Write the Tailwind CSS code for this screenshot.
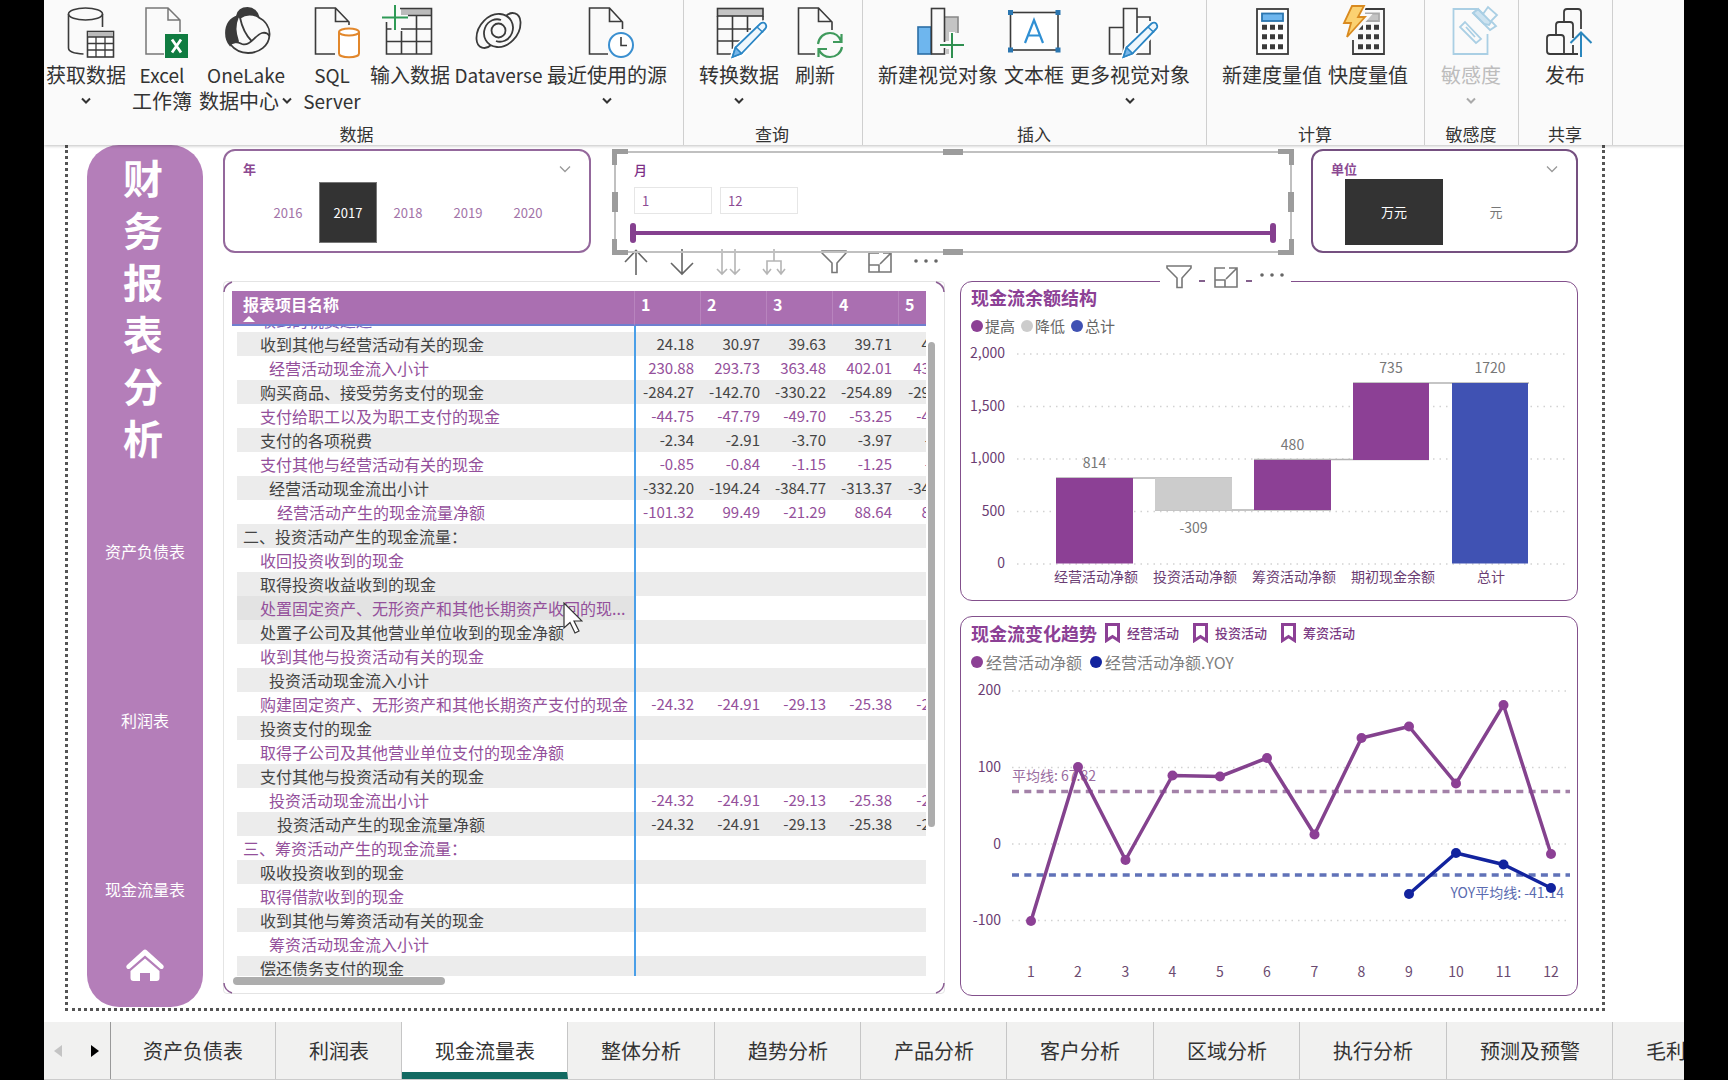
<!DOCTYPE html>
<html lang="zh-CN">
<head>
<meta charset="utf-8">
<title>财务报表分析</title>
<script src="https://cdn.jsdelivr.net/npm/@tailwindcss/browser@4"></script>
</head>
<body class="bg-black min-h-screen flex flex-col font-['Noto_Sans_CJK_SC',sans-serif] text-[#333]">
<div class="mx-11 bg-white flex-1 flex flex-col overflow-hidden">

<!-- Ribbon -->
<header class="relative z-10 bg-[#fafafa] h-[145px] flex shrink-0 shadow-[0_1px_3px_rgba(0,0,0,0.25)] text-[20px] leading-[26px] whitespace-nowrap">
  <section class="pl-0.5 pr-4 pt-[5px] border-r border-[#cfcfcf] flex flex-col justify-between">
    <div class="flex gap-1.5">
      <button class="w-20 flex flex-col items-center">
        <svg class="w-[60px] h-[54px] mb-[3px]" viewBox="0 0 60 54" fill="none" stroke="#3b3b3b" stroke-width="1.6"><ellipse cx="29.5" cy="9" rx="17" ry="6"/><path d="M12.5 9v34c0 3 5 5.500 15 6M46.500 9v13"/><rect x="31.500" y="26.500" width="26" height="25.500" fill="#fff"/><rect x="32" y="27" width="25" height="5" fill="#bbb" stroke="none"/><path d="M31.500 32h26M31.500 38.500h26M31.500 45h26M40 32v20M49 32v20" stroke-width="1.300"/></svg>
        <span>获取数据</span>
        <span class="h-[26px] flex items-center"><svg class="w-3 h-2" viewBox="0 0 12 8" fill="none" stroke="#333" stroke-width="2"><path d="M2 1.500l4 4 4-4"/></svg></span>
      </button>
      <button class="w-[60px] flex flex-col items-center">
        <svg class="w-[60px] h-[54px] mb-[3px]" viewBox="0 0 60 54" fill="none" stroke="#777" stroke-width="1.500"><path d="M32 49H14V3h22l12 12v12M36 3v12h12"/><rect x="33" y="29" width="23" height="24" fill="#107c41" stroke="none"/><path d="M40 34.500l9 13M49 34.500l-9 13" stroke="#fff" stroke-width="2.800"/></svg>
        <span class="text-[19px]">Excel</span><span>工作簿</span>
      </button>
      <button class="w-24 flex flex-col items-center">
        <svg class="w-[60px] h-[54px] mb-[3px]" viewBox="0 0 60 54" fill="none" stroke="#3b3b3b" stroke-width="1.800"><path d="M22 11C14 13 10 20 10 28c0 6 1.500 9 4 12 1-2 4-3 7-3l1-1c-3-8-3-17 0-24z" fill="#3b3b3b"/><path d="M21 11c1-5 5-8 10.500-8 6 0 10 4 11 9-5-3-13-3.500-18 .500z" fill="#3b3b3b"/><path d="M24 12.500c2 10 6 18 12 24M42 12c8 4 12 11 11.500 18C53 41 43 48 32 48c-8 0-14-4-18-9 4-3 8-2 12 0 8 3 13-9 20-11 4-1 7 1 7.500 4"/></svg>
        <span class="text-[19px]">OneLake</span><span class="flex items-center gap-0.5">数据中心<svg class="w-3 h-2" viewBox="0 0 12 8" fill="none" stroke="#333" stroke-width="2"><path d="M2 1.500l4 4 4-4"/></svg></span>
      </button>
      <button class="w-16 flex flex-col items-center">
        <svg class="w-[60px] h-[54px] mb-[3px]" viewBox="0 0 60 54" fill="none" stroke="#3b3b3b" stroke-width="1.600"><path d="M33 49H13.500V3h20L47 17v3M33.500 3v13.500H46"/><g stroke="#e2872b" stroke-width="2" fill="#fff"><path d="M37 27v21.500c0 5 20 5 20 0V27"/><ellipse cx="47" cy="27" rx="10" ry="3.500"/></g></svg>
        <span class="text-[19px]">SQL</span><span class="text-[19px]">Server</span>
      </button>
      <button class="w-20 flex flex-col items-center">
        <svg class="w-[60px] h-[54px] mb-[3px]" viewBox="0 0 60 54" fill="none" stroke="#3b3b3b" stroke-width="1.600"><rect x="21" y="4" width="30" height="6" fill="#bbb" stroke="none"/><path d="M20 3.500h31.500V49H6.500V17M28 10.500h23.500M21 24h30M6.500 36.500h45M36.500 11v38M21.500 26v23M6.500 24h5"/><path d="M15 0v25M2 12.500h26" stroke="#2f9a56" stroke-width="2"/></svg>
        <span>输入数据</span>
      </button>
      <button class="w-[85px] flex flex-col items-center">
        <svg class="w-[60px] h-[54px] mb-[3px]" viewBox="0 0 60 54" fill="none" stroke="#3b3b3b" stroke-width="1.800"><path d="M22 40c-5 5-14 4-14.500-6C7 20 20 8 31 9c11 1 15 11 12 19-3 8-11 10-16 8"/><path d="M37 11c5-5 14-4 14.500 6C52 31 39 43 28 42c-11-1-15-11-12-19 3-8 11-10 16-8"/><circle cx="29.500" cy="25.500" r="7"/></svg>
        <span class="text-[19px]">Dataverse</span>
      </button>
      <button class="w-[120px] flex flex-col items-center">
        <svg class="w-[60px] h-[54px] mb-[3px]" viewBox="0 0 60 54" fill="none" stroke="#3b3b3b" stroke-width="1.600"><path d="M31 49H12.500V3h20L45.500 17v7M32.500 3v13.500h13"/><circle cx="44" cy="40" r="12" stroke="#3a8fd0" stroke-width="2" fill="#fff"/><path d="M44 32v8.500h6"/></svg>
        <span>最近使用的源</span>
        <span class="h-[26px] flex items-center"><svg class="w-3 h-2" viewBox="0 0 12 8" fill="none" stroke="#333" stroke-width="2"><path d="M2 1.500l4 4 4-4"/></svg></span>
      </button>
    </div>
    <h2 class="text-[17px] leading-5 pb-px text-center">数据</h2>
  </section>
  <section class="pl-[15px] pr-[17px] pt-[5px] border-r border-[#cfcfcf] flex flex-col justify-between">
    <div class="flex gap-1.5">
      <button class="w-20 flex flex-col items-center">
        <svg class="w-[60px] h-[54px] mb-[3px]" viewBox="0 0 60 54" fill="none" stroke="#3b3b3b" stroke-width="1.600"><rect x="8.500" y="3.500" width="45.500" height="7.500" fill="#c4c4c4"/><path d="M8.500 11v38H24M54 11v7M23.500 11v33M38.500 11v16M8.500 24H42M8.500 36H31"/><path d="M23 53l3.500-10 25-24c2-2 5-1.500 6 0 1.500 2 1 4-.5 5.500L33 49z" fill="#fff" stroke="#fff" stroke-width="5"/><path d="M23.500 52l3-9.500 25-24c2-1.500 4-1 5 .500s1 3.500-.5 5L32.500 48.500z" fill="#eef7fd" stroke="#2b86c5" stroke-width="1.800"/><path d="M23.500 52l3-9.500 6 6z" fill="#7ab8ea" stroke="#2b86c5"/><path d="M48 22l6 5.500" stroke="#2b86c5"/></svg>
        <span>转换数据</span>
        <span class="h-[26px] flex items-center"><svg class="w-3 h-2" viewBox="0 0 12 8" fill="none" stroke="#333" stroke-width="2"><path d="M2 1.500l4 4 4-4"/></svg></span>
      </button>
      <button class="w-[60px] flex flex-col items-center">
        <svg class="w-[60px] h-[54px] mb-[3px]" viewBox="0 0 60 54" fill="none" stroke="#3b3b3b" stroke-width="1.600"><path d="M30 49H13.500V3h20L47 17v8M33.500 3v13.500H47"/><g stroke="#3f9a5c" stroke-width="2.200"><path d="M33 39c1-7 6-11 12-11 5 0 9 3 11 8M56.500 29v8H48M57 42c-1 6-6 10-12 10-5 0-9-3-11-7M33.500 52v-8H42"/></g></svg>
        <span>刷新</span>
      </button>
    </div>
    <h2 class="text-[17px] leading-5 pb-px text-center">查询</h2>
  </section>
  <section class="pl-[15px] pr-4 pt-[5px] border-r border-[#cfcfcf] flex flex-col justify-between">
    <div class="flex gap-1.5">
      <button class="w-[120px] flex flex-col items-center">
        <svg class="w-[60px] h-[54px] mb-[3px]" viewBox="0 0 60 54" fill="none" stroke="#3b3b3b" stroke-width="1.600"><rect x="10" y="22" width="13" height="27" fill="#6eb6ee" stroke="#2b6ea5"/><path d="M37 12h13v16h-8v8h-5z" fill="#c4c4c4" stroke="none"/><path d="M37 12h13v16" stroke="#888"/><rect x="23.500" y="3.500" width="13" height="45.500" fill="#fafafa"/><path d="M37 44h4v5h-4z" fill="#c4c4c4" stroke="none"/><path d="M44 27v26M31 40h26" stroke="#fafafa" stroke-width="6"/><path d="M44 28v25M32 40h24" stroke="#2f8f50" stroke-width="2"/></svg>
        <span>新建视觉对象</span>
      </button>
      <button class="w-[60px] flex flex-col items-center">
        <svg class="w-[60px] h-[54px] mb-[3px]" viewBox="0 0 60 54" fill="none" stroke="#3b3b3b" stroke-width="1.600"><rect x="6.500" y="7.500" width="47.500" height="37.500" fill="#fff"/><path d="M21 38l9-23 9 23M24 30.500h12" stroke="#2f8fd3" stroke-width="2.200"/><path d="M4 5h5v5H4zM51.500 5h5v5h-5zM4 42.500h5v5H4zM51.500 42.500h5v5h-5z" fill="#2b76b0" stroke="none"/></svg>
        <span>文本框</span>
      </button>
      <button class="w-[120px] flex flex-col items-center">
        <svg class="w-[60px] h-[54px] mb-[3px]" viewBox="0 0 60 54" fill="none" stroke="#3b3b3b" stroke-width="1.600"><path d="M23 49H9.500V22.500H23M23.500 49V3.500H37V28M37 12h13v4M50 32v17H33M23.500 49H28"/><path d="M23 53l3.500-10 25-24c2-2 5-1.500 6 0 1.500 2 1 4-.5 5.500L33 49z" fill="#fff" stroke="#fff" stroke-width="5"/><path d="M23.500 52l3-9.500 25-24c2-1.500 4-1 5 .500s1 3.500-.5 5L32.500 48.500z" fill="#eef7fd" stroke="#2b86c5" stroke-width="1.800"/><path d="M23.500 52l3-9.500 6 6z" fill="#7ab8ea" stroke="#2b86c5"/><path d="M48 22l6 5.500" stroke="#2b86c5"/></svg>
        <span>更多视觉对象</span>
        <span class="h-[26px] flex items-center"><svg class="w-3 h-2" viewBox="0 0 12 8" fill="none" stroke="#333" stroke-width="2"><path d="M2 1.500l4 4 4-4"/></svg></span>
      </button>
    </div>
    <h2 class="text-[17px] leading-5 pb-px text-center">插入</h2>
  </section>
  <section class="pl-[15px] pr-4 pt-[5px] border-r border-[#cfcfcf] flex flex-col justify-between">
    <div class="flex gap-1.5">
      <button class="w-[100px] flex flex-col items-center">
        <svg class="w-[60px] h-[54px] mb-[3px]" viewBox="0 0 60 54" fill="none" stroke="#3b3b3b" stroke-width="1.800"><rect x="15" y="4" width="31" height="45" fill="#fff"/><rect x="20" y="8.500" width="21" height="7.500" fill="#6eb6ee" stroke="#2b76b0"/><path d="M20 22.300h21M20 31.700h21M20 41.700h21" stroke-width="5" stroke-dasharray="5 3"/></svg>
        <span>新建度量值</span>
      </button>
      <button class="w-20 flex flex-col items-center">
        <svg class="w-[60px] h-[54px] mb-[3px]" viewBox="0 0 60 54" fill="none" stroke="#3b3b3b" stroke-width="1.800"><path d="M27 4h19v45H15V35"/><path d="M27 8.500h14V16H24" fill="#c4c4c4" stroke="#aaa"/><path d="M20 22.300h21M20 31.700h21M20 41.700h21" stroke-width="5" stroke-dasharray="5 3"/><path d="M13 0.500h13l-5 11h8L8 35l4-16H5z" fill="#fad06c" stroke="#fafafa" stroke-width="5"/><path d="M14 1h12l-6 11h7L9 32l4-14H6z" fill="#fbd171" stroke="#d98a1f"/></svg>
        <span>快度量值</span>
      </button>
    </div>
    <h2 class="text-[17px] leading-5 pb-px text-center">计算</h2>
  </section>
  <section class="pl-4 pr-[17px] pt-[5px] border-r border-[#cfcfcf] flex flex-col justify-between">
    <button class="w-[60px] flex flex-col items-center text-[#bdbdbd]" disabled>
      <svg class="w-[60px] h-[54px] mb-[3px]" viewBox="0 0 60 54" fill="none" stroke="#aacfe4" stroke-width="1.800"><path d="M36 4H12.500v45h34V29"/><path d="M24 17l16 17-5 4L19 22z" fill="#fafafa"/><path d="M25 22l9 10"/><path d="M37 4l13 13-2 3-5-1-11-11z" fill="#cde3f0"/><path d="M37 4l5 5 5-7 9 8-6 6 5 5-6 4-17-17z"/></svg>
      <span>敏感度</span>
      <span class="h-[26px] flex items-center"><svg class="w-3 h-2" viewBox="0 0 12 8" fill="none" stroke="#aaa" stroke-width="2"><path d="M2 1.500l4 4 4-4"/></svg></span>
    </button>
    <h2 class="text-[17px] leading-5 pb-px text-center">敏感度</h2>
  </section>
  <section class="pl-4 pr-[17px] pt-[5px] border-r border-[#cfcfcf] flex flex-col justify-between">
    <button class="w-[60px] flex flex-col items-center">
      <svg class="w-[60px] h-[54px] mb-[3px]" viewBox="0 0 60 54" fill="none" stroke="#3b3b3b" stroke-width="1.800"><path d="M29 17V7q0-3 3-3h11q3 0 3 3v17M21 30V20q0-3 3-3h11q3 0 3 3v13M38 40v9"/><path d="M43 49H15q-3 0-3-3V33q0-3 3-3h11q3 0 3 3v16"/><path d="M46 52V28M35.500 38L46 27.500 56.500 38" stroke="#2a86bd" stroke-width="2"/></svg>
      <span>发布</span>
    </button>
    <h2 class="text-[17px] leading-5 pb-px text-center">共享</h2>
  </section>
</header>

<!-- Report canvas -->
<main class="flex-1 flex ml-[21px] mr-[79px] mb-[11px] pl-[19px] pr-6 border-x-[3px] border-b-[3px] border-dotted border-[#555]">
  <nav class="w-[116px] shrink-0 mb-px bg-[#b47eb9] rounded-[32px] text-white flex flex-col items-center pt-1.5">
    <h1 class="w-10 mr-1 text-[40px] leading-[52px] font-bold text-center">财务报表分析</h1>
    <div class="mt-[76px] flex flex-col items-center gap-[145px] text-[16px] leading-6">
      <a href="#">资产负债表</a>
      <a href="#">利润表</a>
      <a href="#">现金流量表</a>
    </div>
    <a href="#" aria-label="首页" class="mt-12">
      <svg class="w-10 h-8" viewBox="0 0 40 32" fill="#fff"><path d="M18 1.500q2-1.800 4 0l16 14.500q1.500 1.800 0 3.500-1.500 1-3 0L20 6.500 5 19.500q-1.500 1-3 0-1.500-1.700 0-3.500z"/><path d="M20 9.500L34.500 22v7q0 3-3 3H25v-8H15v8H8.500q-3 0-3-3v-7z"/></svg>
    </a>
  </nav>

  <div class="flex-1 min-w-0 ml-5 pt-1 pb-3 flex flex-col gap-7">
    <!-- Slicers -->
    <div class="grid grid-cols-[minmax(0,372fr)_minmax(0,682fr)_minmax(0,267fr)] gap-[17px] h-[104px] text-[13px] leading-5 text-[#8c4a93]">
      <section class="mr-1 rounded-xl border-2 border-[#94689c] px-[18px] pt-2">
        <div class="flex items-center justify-between">
          <h2 class="font-bold">年</h2>
          <button aria-label="展开"><svg class="w-3 h-2" viewBox="0 0 12 8" fill="none" stroke="#999" stroke-width="1.300"><path d="M1 1.500l5 5 5-5"/></svg></button>
        </div>
        <div class="flex pl-4 gap-0.5 mt-[3px] text-[#a273a8]">
          <button class="w-[58px] h-[61px]">2016</button>
          <button class="w-[58px] h-[61px] bg-[#333] border border-[#777] text-white">2017</button>
          <button class="w-[58px] h-[61px]">2018</button>
          <button class="w-[58px] h-[61px]">2019</button>
          <button class="w-[58px] h-[61px]">2020</button>
        </div>
      </section>
      <section class="relative z-[5] px-[22px] pt-[11px]">
        <div class="absolute inset-x-0.5 top-0.5 bottom-0 border-2 border-[#c0c0c0] pointer-events-none"></div>
        <div class="absolute left-0 top-0 size-4 border-l-[5px] border-t-[5px] border-[#9c9c9c]"></div>
        <div class="absolute right-0 top-0 size-4 border-r-[5px] border-t-[5px] border-[#9c9c9c]"></div>
        <div class="absolute left-0 -bottom-0.5 size-4 border-l-[5px] border-b-[5px] border-[#9c9c9c]"></div>
        <div class="absolute right-0 -bottom-0.5 size-4 border-r-[5px] border-b-[5px] border-[#9c9c9c]"></div>
        <div class="absolute left-1/2 -ml-2.5 top-0 w-5 h-1.5 bg-[#9c9c9c]"></div>
        <div class="absolute left-1/2 -ml-2.5 -bottom-0.5 w-5 h-1.5 bg-[#9c9c9c]"></div>
        <div class="absolute left-0 top-[43px] w-1.5 h-5 bg-[#9c9c9c]"></div>
        <div class="absolute right-0 top-[43px] w-1.5 h-5 bg-[#9c9c9c]"></div>
        <h2 class="font-medium text-[#7d2f87]">月</h2>
        <div class="flex gap-2 mt-[7px]">
          <input aria-label="起始月" value="1" class="w-[78px] h-[27px] border border-[#e6e6e6] px-[7px]">
          <input aria-label="结束月" value="12" class="w-[78px] h-[27px] border border-[#e6e6e6] px-[7px]">
        </div>
        <div class="relative -mx-1 mt-[9px] h-5 flex items-center justify-between">
          <div class="absolute inset-x-1 top-2 h-1 bg-[#85408f]"></div>
          <div class="relative w-1.5 h-5 rounded-full bg-[#85408f]"></div>
          <div class="relative w-1.5 h-5 rounded-full bg-[#85408f]"></div>
          <input type="range" min="1" max="12" value="1" aria-label="起始月滑块" class="absolute left-0 w-1/2 opacity-0">
          <input type="range" min="1" max="12" value="12" aria-label="结束月滑块" class="absolute right-0 w-1/2 opacity-0">
        </div>
      </section>
      <section class="rounded-xl border-2 border-[#755080] px-[18px] pt-2">
        <div class="flex items-center justify-between">
          <h2 class="font-bold">单位</h2>
          <button aria-label="展开"><svg class="w-3 h-2" viewBox="0 0 12 8" fill="none" stroke="#999" stroke-width="1.300"><path d="M1 1.500l5 5 5-5"/></svg></button>
        </div>
        <div class="flex pl-[14px] gap-1">
          <button class="w-[98px] h-[66px] bg-[#333] text-white">万元</button>
          <button class="w-[98px] h-[66px] text-[#777]">元</button>
        </div>
      </section>
    </div>

    <div class="flex-1 grid grid-cols-[minmax(0,722fr)_minmax(0,618fr)] gap-[15px]">
      <!-- Statement table -->
      <section class="relative mb-0.5 border border-[#e4e4e4] rounded-sm">
        <svg class="absolute -left-px -top-px size-3" viewBox="0 0 12 12" fill="none" stroke="#8c5f94" stroke-width="1.500"><path d="M1 11q0-7 8-10"/></svg>
        <svg class="absolute -right-px -top-px size-3" viewBox="0 0 12 12" fill="none" stroke="#8c5f94" stroke-width="1.500"><path d="M11 11q0-7-8-10"/></svg>
        <svg class="absolute -left-px -bottom-px size-3" viewBox="0 0 12 12" fill="none" stroke="#8c5f94" stroke-width="1.500"><path d="M1 1q0 7 8 10"/></svg>
        <svg class="absolute -right-px -bottom-px size-3" viewBox="0 0 12 12" fill="none" stroke="#8c5f94" stroke-width="1.500"><path d="M11 1q0 7-8 10"/></svg>

        <div class="absolute left-[399px] -top-[33px] flex gap-5">
          <button aria-label="向上钻取" class="w-[26px] h-[27px]"><svg viewBox="0 0 26 27" fill="none" stroke="#666" stroke-width="1.600"><path d="M13 26V2M2 13L13 1.500 24 13"/></svg></button>
          <button aria-label="向下钻取" class="w-[26px] h-[27px]"><svg viewBox="0 0 26 27" fill="none" stroke="#666" stroke-width="1.600"><path d="M13 0v24M2 14l11 11 11-11"/></svg></button>
          <button aria-label="转至下一级别" class="w-[26px] h-[27px]"><svg viewBox="0 0 26 27" fill="none" stroke="#b5b5b5" stroke-width="1.600"><path d="M7 0v25M2 20l5 5 5-5M20 0v25M15 20l5 5 5-5"/></svg></button>
          <button aria-label="展开下一级别" class="w-[26px] h-[27px]"><svg viewBox="0 0 26 27" fill="none" stroke="#b5b5b5" stroke-width="1.600"><path d="M13 0v12M6 25V12h14v13M2 20l4 5 4-5M16 20l4 5 4-5"/></svg></button>
          <button aria-label="筛选器" class="w-[26px] h-[27px] ml-[14px]"><svg viewBox="0 0 26 27" fill="none" stroke="#777" stroke-width="1.600"><path d="M1 2h24v2L16 14v9.500h-5V14L1 4z"/></svg></button>
          <button aria-label="焦点模式" class="w-[26px] h-[27px]"><svg viewBox="0 0 26 27" fill="none" stroke="#777" stroke-width="1.600"><path d="M12 4H2v19h22V12M2 16h10v7M13 15L24 4M16 4h8v8"/></svg></button>
          <button aria-label="更多选项" class="w-[26px] h-[27px]"><svg viewBox="0 0 26 27" fill="#666"><circle cx="3" cy="12" r="1.800"/><circle cx="13" cy="12" r="1.800"/><circle cx="23" cy="12" r="1.800"/></svg></button>
        </div>

        <div class="ml-2 mr-[18px] mt-[9px] h-[685px] overflow-hidden">
          <table class="table-fixed w-[733px] border-separate border-spacing-0 text-[16px] leading-6">
            <colgroup><col class="w-[402px]"><col class="w-[66px]"><col class="w-[66px]"><col class="w-[66px]"><col class="w-[66px]"><col class="w-[67px]"></colgroup>
            <thead>
              <tr class="bg-[#aa6fb1] text-white text-left h-[35px]">
                <th scope="col" class="relative pl-[11px] pb-2 font-bold border-b-2 border-[#6f7fd0]">报表项目名称<svg class="absolute left-[11px] bottom-0.5 w-3 h-1.5" viewBox="0 0 12 6" fill="#fff"><path d="M0 6l6-6 6 6z"/></svg></th>
                <th scope="col" class="pl-1.5 pb-2 border-l border-l-[#b884be] border-b-2 border-b-[#6f7fd0]">1</th>
                <th scope="col" class="pl-1.5 pb-2 border-l border-l-[#b884be] border-b-2 border-b-[#6f7fd0]">2</th>
                <th scope="col" class="pl-1.5 pb-2 border-l border-l-[#b884be] border-b-2 border-b-[#6f7fd0]">3</th>
                <th scope="col" class="pl-1.5 pb-2 border-l border-l-[#b884be] border-b-2 border-b-[#6f7fd0]">4</th>
                <th scope="col" class="pl-1.5 pb-2 border-l border-l-[#b884be] border-b-2 border-b-[#6f7fd0]">5</th>
              </tr>
            </thead>
            <tbody id="rows"></tbody>
          </table>
        </div>
        <div class="absolute right-[9px] top-[60px] w-[7px] h-[485px] rounded-full bg-[#adadad]"></div>
        <div class="absolute left-[9px] bottom-2 w-[212px] h-2 rounded-full bg-[#adadad]"></div>
        <svg class="absolute left-[339px] top-[320px] w-5 h-8" viewBox="0 0 20 32" fill="#fff" stroke="#333" stroke-width="1.200"><path d="M1 1v25l6-5.500 5 10.500 4-2-5-10h8z"/></svg>
      </section>

      <!-- Charts -->
      <div class="flex flex-col gap-[15px]">
        <section class="relative h-80 rounded-xl border border-[#83508c] pt-[3px]">
          <div class="absolute left-[199px] -top-[19px] w-[131px] h-[27px] bg-white flex items-center justify-between px-1.5">
            <button aria-label="筛选器" class="w-[26px] h-[27px]"><svg viewBox="0 0 26 27" fill="none" stroke="#777" stroke-width="1.600"><path d="M1 3h24v2L16 15v9.500h-5V15L1 5z"/></svg></button>
            <span class="w-1.5 h-0.5 mt-[9px] bg-[#83608c]"></span>
            <button aria-label="焦点模式" class="w-[26px] h-[27px]"><svg viewBox="0 0 26 27" fill="none" stroke="#777" stroke-width="1.600"><path d="M12 5H2v19h22V13M2 17h10v7M13 16L24 5M16 5h8v8"/></svg></button>
            <span class="w-1.5 h-0.5 mt-[9px] bg-[#83608c]"></span>
            <button aria-label="更多选项" class="w-[26px] h-[27px]"><svg viewBox="0 0 26 27" fill="#666"><circle cx="3" cy="12" r="1.800"/><circle cx="13" cy="12" r="1.800"/><circle cx="23" cy="12" r="1.800"/></svg></button>
          </div>
          <h2 class="ml-2.5 h-6 leading-6 text-[18px] font-bold text-[#8c4095]">现金流余额结构</h2>
          <ul class="ml-2.5 mt-[5px] h-6 flex items-center gap-1.5 text-[15px] text-[#666]">
            <li class="flex items-center gap-0.5"><i class="size-3 rounded-full bg-[#8c4095]"></i>提高</li>
            <li class="flex items-center gap-0.5"><i class="size-3 rounded-full bg-[#ccc]"></i>降低</li>
            <li class="flex items-center gap-0.5"><i class="size-3 rounded-full bg-[#4052b3]"></i>总计</li>
          </ul>
          <svg class="w-full" viewBox="961 338 616 250" font-size="14">
            <g stroke="#d2d2d2" stroke-width="1.500" stroke-dasharray="1.500 5"><path d="M1017 354h550M1017 406.500h550M1017 459h550M1017 511.500h550M1017 564h550"/></g>
            <g fill="#6b3d73" text-anchor="end"><text x="1005" y="358">2,000</text><text x="1005" y="411">1,500</text><text x="1005" y="463">1,000</text><text x="1005" y="516">500</text><text x="1005" y="568">0</text></g>
            <path d="M1056 478h176M1155 510h176M1254 459.500h175M1353 383h176" stroke="#b3b3b3" stroke-width="1.500"/>
            <g fill="#8c4095"><rect x="1056" y="478" width="77" height="85.500"/><rect x="1254" y="460" width="77" height="50"/><rect x="1353" y="383" width="76" height="77"/></g>
            <rect x="1155" y="478" width="77" height="32" fill="#ccc"/><rect x="1452" y="383" width="76" height="180.500" fill="#4052b3"/>
            <g fill="#777" text-anchor="middle"><text x="1094.500" y="468">814</text><text x="1193.500" y="533">-309</text><text x="1292.500" y="450">480</text><text x="1391" y="373">735</text><text x="1490" y="373">1720</text></g>
            <g fill="#6b3d73" text-anchor="middle"><text x="1096" y="582">经营活动净额</text><text x="1195" y="582">投资活动净额</text><text x="1294" y="582">筹资活动净额</text><text x="1393" y="582">期初现金余额</text><text x="1491" y="582">总计</text></g>
          </svg>
        </section>

        <section class="flex-1 rounded-xl border border-[#83508c] pt-1">
          <div class="ml-2.5 h-6 flex items-center text-[#8c4095]">
            <h2 class="text-[18px] font-bold">现金流变化趋势</h2>
            <div class="ml-2 flex gap-3.5 text-[13px] font-medium text-[#7a3a83]">
              <button class="flex items-center gap-[7px]"><svg class="w-[15px] h-5" viewBox="0 0 15 20" fill="none" stroke="#8c4095" stroke-width="3"><path d="M1.500 1.500h12v16l-6-4-6 4z"/></svg>经营活动</button>
              <button class="flex items-center gap-[7px]"><svg class="w-[15px] h-5" viewBox="0 0 15 20" fill="none" stroke="#8c4095" stroke-width="3"><path d="M1.500 1.500h12v16l-6-4-6 4z"/></svg>投资活动</button>
              <button class="flex items-center gap-[7px]"><svg class="w-[15px] h-5" viewBox="0 0 15 20" fill="none" stroke="#8c4095" stroke-width="3"><path d="M1.500 1.500h12v16l-6-4-6 4z"/></svg>筹资活动</button>
            </div>
          </div>
          <ul class="ml-2.5 mt-[5px] h-6 flex items-center gap-2 text-[16px] text-[#808080]">
            <li class="flex items-center gap-[3px]"><i class="size-3 rounded-full bg-[#8c4095]"></i>经营活动净额</li>
            <li class="flex items-center gap-[3px]"><i class="size-3 rounded-full bg-[#12239e]"></i>经营活动净额.YOY</li>
          </ul>
          <svg class="w-full" viewBox="961 674 616 310" font-size="14">
            <g stroke="#d2d2d2" stroke-width="1.500" stroke-dasharray="1.500 5"><path d="M1012 691h556M1012 767.500h556M1012 844h556M1012 920.500h556"/></g>
            <g fill="#6b3d73" text-anchor="end"><text x="1001" y="695">200</text><text x="1001" y="772">100</text><text x="1001" y="849">0</text><text x="1001" y="925">-100</text></g>
            <text x="1012" y="781" fill="#9a6ba0">平均线: 67.82</text>
            <text x="1564" y="898" text-anchor="end" fill="#5a6bb0">YOY平均线: -41.14</text>
            <g stroke-width="3.500" stroke-dasharray="7 5.300"><path d="M1012 791.500h558" stroke="#a381a8"/><path d="M1012 875h558" stroke="#6072b8"/></g>
            <path d="M1031 921L1078 767 1125.500 860 1172.500 775.500 1220 776.500 1267 758 1314.500 834.500 1361.500 738 1409 726.500 1456 783.500 1503.500 705 1551 854" fill="none" stroke="#84428e" stroke-width="3.500" stroke-linejoin="round"/>
            <g fill="#8c4095"><circle cx="1031" cy="921" r="5"/><circle cx="1078" cy="767" r="5"/><circle cx="1125.500" cy="860" r="5"/><circle cx="1172.500" cy="775.500" r="5"/><circle cx="1220" cy="776.500" r="5"/><circle cx="1267" cy="758" r="5"/><circle cx="1314.500" cy="834.500" r="5"/><circle cx="1361.500" cy="738" r="5"/><circle cx="1409" cy="726.500" r="5"/><circle cx="1456" cy="783.500" r="5"/><circle cx="1503.500" cy="705" r="5"/><circle cx="1551" cy="854" r="5"/></g>
            <path d="M1409 894L1456 853 1503.500 864.500 1551 888" fill="none" stroke="#12239e" stroke-width="3.500" stroke-linejoin="round"/>
            <g fill="#12239e"><circle cx="1409" cy="894" r="5"/><circle cx="1456" cy="853" r="5"/><circle cx="1503.500" cy="864.500" r="5"/><circle cx="1551" cy="888" r="5"/></g>
            <g fill="#6b4a70" text-anchor="middle"><text x="1031" y="977">1</text><text x="1078" y="977">2</text><text x="1125.500" y="977">3</text><text x="1172.500" y="977">4</text><text x="1220" y="977">5</text><text x="1267" y="977">6</text><text x="1314.500" y="977">7</text><text x="1361.500" y="977">8</text><text x="1409" y="977">9</text><text x="1456" y="977">10</text><text x="1503.500" y="977">11</text><text x="1551" y="977">12</text></g>
          </svg>
        </section>
      </div>
    </div>
  </div>
</main>

<!-- Page tabs -->
<footer class="h-[58px] shrink-0 bg-[#f1f1f0] border-b border-[#ccc] flex text-[20px] whitespace-nowrap overflow-hidden">
  <div class="w-[67px] shrink-0 border-r border-[#999] flex items-center justify-between pl-2.5 pr-[11px]">
    <button aria-label="上一页" disabled><svg class="w-2 h-3" viewBox="0 0 8 12" fill="#c4c4c4"><path d="M8 0v12L0 6z"/></svg></button>
    <button aria-label="下一页"><svg class="w-2 h-3" viewBox="0 0 8 12" fill="#000"><path d="M0 0v12l8-6z"/></svg></button>
  </div>
  <button class="shrink-0 px-8 border-r border-[#c6c6c6]">资产负债表</button>
  <button class="shrink-0 pl-[33px] pr-8 border-r border-[#c6c6c6]">利润表</button>
  <button class="shrink-0 pl-[33px] pr-8 pt-[7px] border-r border-r-[#c6c6c6] bg-white border-b-[7px] border-b-[#136a62]">现金流量表</button>
  <button class="shrink-0 px-[33px] border-r border-[#c6c6c6]">整体分析</button>
  <button class="shrink-0 pl-[33px] pr-8 border-r border-[#c6c6c6]">趋势分析</button>
  <button class="shrink-0 pl-[33px] pr-8 border-r border-[#c6c6c6]">产品分析</button>
  <button class="shrink-0 px-[33px] border-r border-[#c6c6c6]">客户分析</button>
  <button class="shrink-0 pl-[33px] pr-8 border-r border-[#c6c6c6]">区域分析</button>
  <button class="shrink-0 px-[33px] border-r border-[#c6c6c6]">执行分析</button>
  <button class="shrink-0 pl-[33px] pr-8 border-r border-[#c6c6c6]">预测及预警</button>
  <button class="shrink-0 pl-[33px] pr-8">毛利分析</button>
</footer>
</div>

<script>
  // [indent level, item, monthly values]
  const data = [
    [1, '收到其他与经营活动有关的现金', ['24.18', '30.97', '39.63', '39.71', '45.26']],
    [2, '经营活动现金流入小计', ['230.88', '293.73', '363.48', '402.01', '433.52']],
    [1, '购买商品、接受劳务支付的现金', ['-284.27', '-142.70', '-330.22', '-254.89', '-290.14']],
    [1, '支付给职工以及为职工支付的现金', ['-44.75', '-47.79', '-49.70', '-53.25', '-49.81']],
    [1, '支付的各项税费', ['-2.34', '-2.91', '-3.70', '-3.97', '-4.12']],
    [1, '支付其他与经营活动有关的现金', ['-0.85', '-0.84', '-1.15', '-1.25', '-1.31']],
    [2, '经营活动现金流出小计', ['-332.20', '-194.24', '-384.77', '-313.37', '-345.38']],
    [3, '经营活动产生的现金流量净额', ['-101.32', '99.49', '-21.29', '88.64', '88.14']],
    [0, '二、投资活动产生的现金流量：', []],
    [1, '收回投资收到的现金', []],
    [1, '取得投资收益收到的现金', []],
    [1, '处置固定资产、无形资产和其他长期资产收回的现...', []],
    [1, '处置子公司及其他营业单位收到的现金净额', []],
    [1, '收到其他与投资活动有关的现金', []],
    [2, '投资活动现金流入小计', []],
    [1, '购建固定资产、无形资产和其他长期资产支付的现金', ['-24.32', '-24.91', '-29.13', '-25.38', '-27.15']],
    [1, '投资支付的现金', []],
    [1, '取得子公司及其他营业单位支付的现金净额', []],
    [1, '支付其他与投资活动有关的现金', []],
    [2, '投资活动现金流出小计', ['-24.32', '-24.91', '-29.13', '-25.38', '-27.15']],
    [3, '投资活动产生的现金流量净额', ['-24.32', '-24.91', '-29.13', '-25.38', '-27.15']],
    [0, '三、筹资活动产生的现金流量：', []],
    [1, '吸收投资收到的现金', []],
    [1, '取得借款收到的现金', []],
    [1, '收到其他与筹资活动有关的现金', []],
    [2, '筹资活动现金流入小计', []],
    [1, '偿还债务支付的现金', []],
  ];
  const indents = ['pl-1.5', 'pl-[23px]', 'pl-8', 'pl-10'];
  const edge = 'border-l-2 border-[#4a9fe8]';
  let html = `<tr><td class="p-0"><div class="h-[6px] flex items-end overflow-hidden pl-7 text-[#7d62b8]">收到的税费返还</div></td><td class="p-0 ${edge}"></td><td></td><td></td><td></td><td></td></tr>`;
  data.forEach(([level, name, values], i) => {
    const shade = i % 2 ? 'bg-white text-[#94509b]' : 'bg-[#ececec] text-[#444]';
    const first = i === 11 ? 'bg-[#e3e3e3] text-[#94509b]' : shade;
    html += `<tr class="h-6"><td class="p-0 pl-[5px]"><div class="h-6 whitespace-nowrap overflow-hidden ${indents[level]} ${first}">${name}</div></td>`;
    for (let c = 0; c < 5; c++) {
      html += `<td class="p-0 pr-1.5 text-right text-[15px] ${shade} ${c === 0 ? edge : ''}">${values[c] || ''}</td>`;
    }
    html += '</tr>';
  });
  document.getElementById('rows').innerHTML = html;
</script>
</body>
</html>
